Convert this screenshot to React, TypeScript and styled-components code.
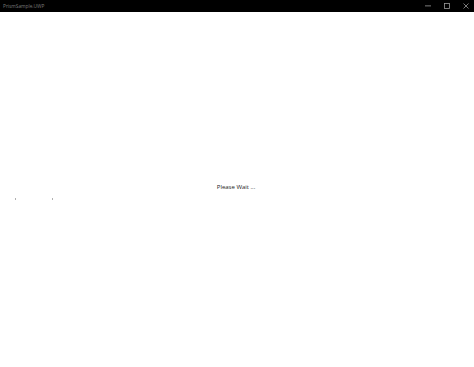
import React from "react";
import styled, { createGlobalStyle } from "styled-components";

const Global = createGlobalStyle`
  html, body { margin: 0; padding: 0; background: #fff; }
  body { font-family: "Segoe UI", "Open Sans", "Liberation Sans", sans-serif; }
`;

const Window = styled.div`
  width: 474px;
  height: 367px;
  display: flex;
  flex-direction: column;
  background: #ffffff;
  overflow: hidden;
`;

const TitleBar = styled.div`
  height: 12px;
  background: #000;
  display: flex;
  align-items: center;
  justify-content: space-between;
  flex-shrink: 0;
`;

const Title = styled.span`
  color: #7a7a7a;
  font-size: 4.8px;
  padding-left: 3px;
  line-height: 12px;
`;

const Controls = styled.div`
  display: flex;
  height: 12px;
`;

const Ctl = styled.div`
  width: 19px;
  height: 12px;
  box-sizing: border-box;
  padding-right: 5px;
  display: flex;
  align-items: center;
  justify-content: flex-end;
`;

const Content = styled.div`
  flex: 1;
  position: relative;
  display: flex;
  align-items: center;
  justify-content: center;
`;

const Wait = styled.div`
  font-size: 6px;
  color: #1a1a1a;
  margin-top: -5px;
  margin-left: -2px;
`;

const Dot = styled.div<{ $x: number }>`
  position: absolute;
  top: 186px;
  left: ${(p) => p.$x}px;
  width: 1px;
  height: 2px;
  background: #b0b0b0;
`;

export default function App() {
  return (
    <>
      <Global />
      <Window>
        <TitleBar>
          <Title>PrismSample.UWP</Title>
          <Controls>
            <Ctl>
              <svg width="6" height="2" viewBox="0 0 6 2">
                <rect x="0" y="0.5" width="6" height="0.8" fill="#9a9a9a" />
              </svg>
            </Ctl>
            <Ctl>
              <svg width="6" height="6" viewBox="0 0 6 6">
                <rect x="0.5" y="0.5" width="5" height="5" fill="none" stroke="#9a9a9a" strokeWidth="0.8" />
              </svg>
            </Ctl>
            <Ctl>
              <svg width="6" height="6" viewBox="0 0 6 6">
                <path d="M0.5 0.5L5.5 5.5M5.5 0.5L0.5 5.5" stroke="#9a9a9a" strokeWidth="0.8" />
              </svg>
            </Ctl>
          </Controls>
        </TitleBar>
        <Content>
          <Wait>Please Wait ...</Wait>
          <Dot $x={15} />
          <Dot $x={52} />
        </Content>
      </Window>
    </>
  );
}
